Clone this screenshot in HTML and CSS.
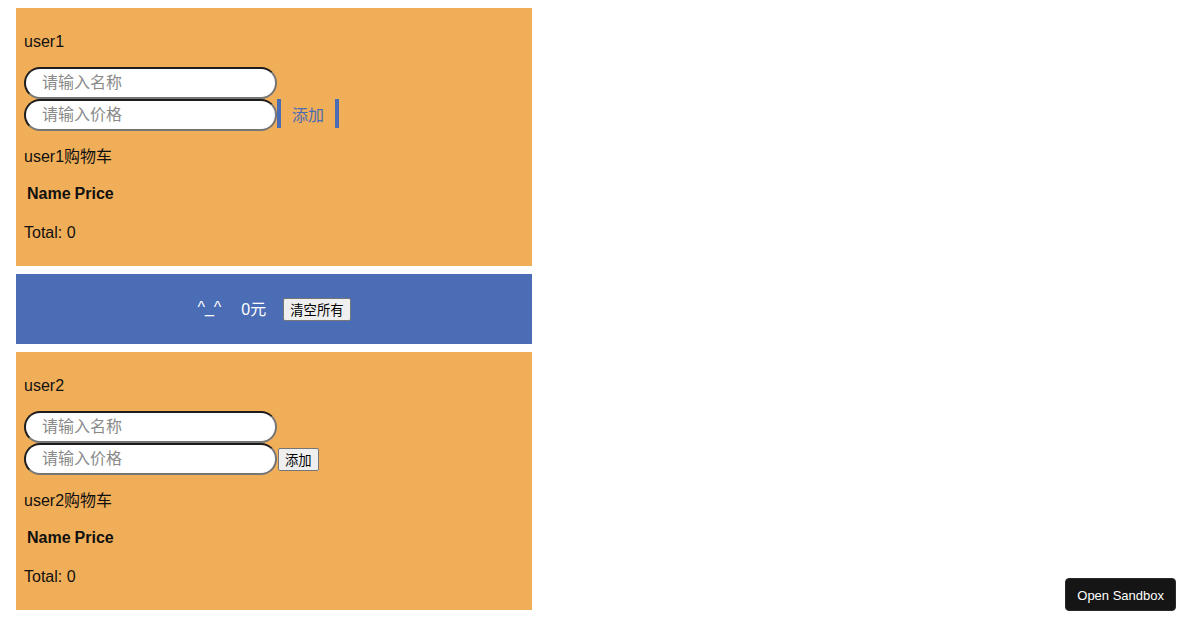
FILE: index.html
```html
<!DOCTYPE html>
<html lang="zh">
<head>
<meta charset="utf-8">
<title>Shop</title>
<link rel="stylesheet" href="styles.css">
</head>
<body>
<div id="root" class="app">
  <div class="user-panel">
    <p class="user-name">user1</p>
    <div class="add-form">
      <div class="form-row"><input class="field" type="text" placeholder="请输入名称"></div>
      <div class="form-row"><input class="field" type="text" placeholder="请输入价格"><button class="add-btn styled">添加</button></div>
    </div>
    <p class="cart-title">user1购物车</p>
    <table class="cart-table">
      <thead><tr><th>Name</th><th>Price</th></tr></thead>
      <tbody></tbody>
    </table>
    <p class="total">Total: 0</p>
  </div>
  <div class="summary-panel">
    <p class="summary-line"><span class="face">^_^</span><span class="count">0元</span><button class="clear-btn">清空所有</button></p>
  </div>
  <div class="user-panel">
    <p class="user-name">user2</p>
    <div class="add-form">
      <div class="form-row"><input class="field" type="text" placeholder="请输入名称"></div>
      <div class="form-row"><input class="field" type="text" placeholder="请输入价格"><button class="add-btn plain">添加</button></div>
    </div>
    <p class="cart-title">user2购物车</p>
    <table class="cart-table">
      <thead><tr><th>Name</th><th>Price</th></tr></thead>
      <tbody></tbody>
    </table>
    <p class="total">Total: 0</p>
  </div>
</div>
<a class="sandbox-btn" href="#">Open Sandbox</a>
</body>
</html>
```
FILE: styles.css
```css
html, body {
  margin: 0;
  padding: 0;
  background: #ffffff;
}
body {
  margin: 8px;
  font-family: "Liberation Sans", Arial, "Noto Sans CJK SC", sans-serif;
  font-size: 16px;
  color: #111;
}
.app {
  width: 516px;
  margin-left: 8px;
  display: flex;
  flex-direction: column;
  gap: 8px;
}
.user-panel {
  background: #f0ae58;
  padding: 9px 8px;
}
.user-panel p {
  margin: 16px 0;
  line-height: 18px;
}
.user-panel p.cart-title,
.user-panel p.total {
  padding-top: 1px;
  line-height: 17px;
}
.add-form {
  display: flex;
  flex-direction: column;
}
.form-row {
  display: flex;
  align-items: center;
}
.field {
  box-sizing: border-box;
  width: 253px;
  height: 32px;
  margin: 0;
  padding: 0 16px;
  border-radius: 16px;
  border-width: 2px;
  border-style: solid;
  border-color: #1c1c1c #767676 #767676 #1c1c1c;
  background: #fff;
  font-family: "Liberation Sans", Arial, "Noto Sans CJK SC", sans-serif;
  font-size: 16px;
  outline: none;
}
.field::placeholder {
  color: #8a8a8a;
}
.add-btn {
  font-family: "Liberation Sans", Arial, "Noto Sans CJK SC", sans-serif;
  font-size: 16px;
  cursor: pointer;
}
.add-btn.styled {
  align-self: flex-start;
  height: 29px;
  margin: 0;
  padding: 0 11px;
  background: transparent;
  color: #4a6cb5;
  border: none;
  border-left: 4px solid #4a6cb5;
  border-right: 4px solid #4a6cb5;
}
.add-btn.plain {
  margin: 0 0 0 1px;
  padding: 1px 6px;
  background: #efefef;
  color: #000;
  border: 1px solid #767676;
  border-radius: 2px;
  font-size: 13.33px;
}
.cart-table {
  border-spacing: 2px;
  margin: 0;
}
.cart-table th {
  padding: 1px;
  line-height: 20px;
  font-weight: bold;
  text-align: left;
}
.summary-panel {
  background: #4b6db5;
  padding: 8px;
  color: #fff;
  text-align: center;
}
.summary-line {
  margin: 16px 0;
  height: 22px;
  display: flex;
  justify-content: center;
  align-items: center;
}
.face,
.count {
  position: relative;
  top: -1px;
}
.face {
  margin-right: 20px;
}
.count {
  margin-right: 17px;
}
.clear-btn {
  font-family: "Liberation Sans", Arial, "Noto Sans CJK SC", sans-serif;
  font-size: 13.33px;
  padding: 1px 6px;
  background: #efefef;
  color: #000;
  border: 1px solid #767676;
  border-radius: 2px;
}
.sandbox-btn {
  position: fixed;
  right: 24px;
  bottom: 19px;
  background: #151515;
  color: #fff;
  font-family: "Liberation Sans", Arial, sans-serif;
  font-size: 13px;
  text-decoration: none;
  white-space: nowrap;
  padding: 0 11px;
  height: 33px;
  line-height: 33px;
  border-radius: 4px;
  border: 1px solid #2a2a2a;
  box-sizing: border-box;
  text-align: center;
}
```
